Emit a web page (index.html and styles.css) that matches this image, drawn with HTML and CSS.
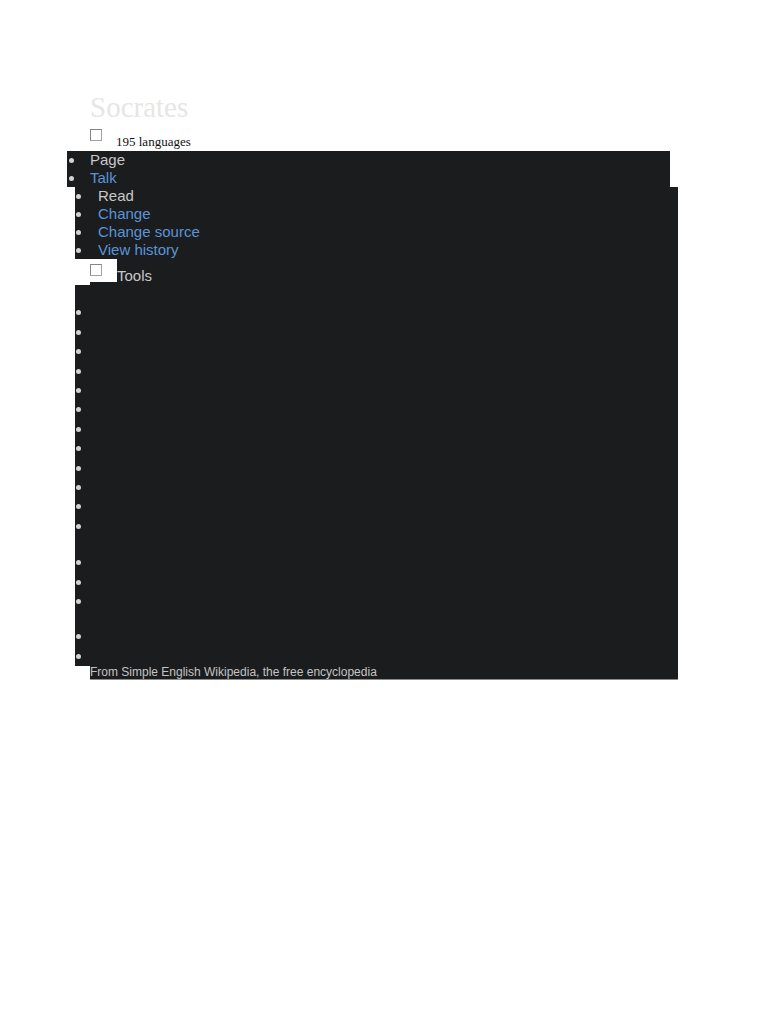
FILE: index.html
```html
<!DOCTYPE html>
<html lang="en">
<head>
<meta charset="utf-8">
<title>Socrates - Simple English Wikipedia</title>
<link rel="stylesheet" href="styles.css">
</head>
<body>
<div class="page">
  <h1 class="title">Socrates</h1>
  <div class="lang-row">
    <input type="checkbox" class="check" aria-label="Languages">
    <span class="lang-label">195 languages</span>
  </div>
  <ul class="tabs">
    <li class="item"><span class="text">Page</span></li>
    <li class="item"><a class="link" href="#">Talk</a></li>
  </ul>
  <div class="main-block">
    <ul class="views">
      <li class="item"><span class="text">Read</span></li>
      <li class="item"><a class="link" href="#">Change</a></li>
      <li class="item"><a class="link" href="#">Change source</a></li>
      <li class="item"><a class="link" href="#">View history</a></li>
    </ul>
    <div class="tools-row">
      <div class="tools-toggle">
        <div class="tools-box"><input type="checkbox" class="check" aria-label="Tools"></div>
        <div class="tools-step"></div>
      </div>
      <span class="tools-label">Tools</span>
    </div>
    <div class="tool-lists">
      <ul class="tool-group">
        <li class="tool-item"></li>
        <li class="tool-item"></li>
        <li class="tool-item"></li>
        <li class="tool-item"></li>
        <li class="tool-item"></li>
        <li class="tool-item"></li>
        <li class="tool-item"></li>
        <li class="tool-item"></li>
        <li class="tool-item"></li>
        <li class="tool-item"></li>
        <li class="tool-item"></li>
        <li class="tool-item"></li>
      </ul>
      <ul class="tool-group group-2">
        <li class="tool-item"></li>
        <li class="tool-item"></li>
        <li class="tool-item"></li>
      </ul>
      <ul class="tool-group group-3">
        <li class="tool-item"></li>
        <li class="tool-item"></li>
      </ul>
    </div>
  </div>
  <div class="tagline">From Simple English Wikipedia, the free encyclopedia</div>
</div>
</body>
</html>
```

FILE: styles.css
```css
html, body {
  margin: 0;
  padding: 0;
  background: #ffffff;
}

.page {
  padding-top: 90px;
  font-family: "Liberation Sans", Arial, sans-serif;
}

.title {
  margin: 0 0 0 90px;
  font-family: "Liberation Serif", "Times New Roman", serif;
  font-weight: normal;
  font-size: 29px;
  line-height: 34px;
  color: #e6e6e4;
}

.lang-row {
  display: flex;
  align-items: flex-start;
  height: 27px;
  margin-left: 90px;
}

.check {
  appearance: none;
  -webkit-appearance: none;
  display: block;
  box-sizing: border-box;
  width: 12px;
  height: 12px;
  margin: 0;
  background: #ffffff;
  border: 1px solid #a2a2a2;
  border-top-color: #858585;
  border-left-color: #858585;
  border-radius: 0;
}

.lang-row .check {
  margin-top: 5px;
}

.lang-label {
  margin-top: 10px;
  margin-left: 14px;
  font-family: "Liberation Serif", "Times New Roman", serif;
  font-size: 13px;
  line-height: 15px;
  color: #111111;
}

.tabs,
.views,
.tool-group {
  list-style: none;
  margin: 0;
  padding: 0;
}

.tabs {
  margin-left: 67px;
  width: 602.5px;
  background: #1b1c1e;
}

.item {
  display: flex;
  align-items: center;
  height: 18px;
  font-size: 15px;
  line-height: 18px;
}

.item::before,
.tool-item::before {
  content: "";
  flex: none;
  width: 5px;
  height: 5px;
  border-radius: 50%;
  background: #d2d2d2;
}

.tabs .item::before {
  margin-left: 2.2px;
  margin-right: 15.8px;
}

.views .item::before {
  margin-left: 0.5px;
  margin-right: 17.5px;
}

.text {
  color: #c8c8c8;
}

.link {
  color: #5a94d8;
  text-decoration: none;
}

.main-block {
  margin-left: 75px;
  width: 603px;
  background: #1b1c1e;
}

.tools-row {
  display: flex;
  height: 27px;
}

.tools-toggle {
  display: flex;
  flex-direction: column;
  width: 42px;
  flex: none;
}

.tools-box {
  box-sizing: border-box;
  height: 23px;
  padding: 4.5px 0 0 15px;
  background: #ffffff;
}

.tools-step {
  width: 15px;
  height: 3px;
  background: #ffffff;
}

.tools-label {
  padding-top: 8px;
  font-size: 15px;
  line-height: 18px;
  color: #c8c8c8;
}

.tool-lists {
  padding-top: 17.3px;
}

.tool-item {
  display: flex;
  align-items: center;
  height: 19.4px;
}

.tool-item::before {
  margin-left: 0.8px;
}

.group-2 {
  margin-top: 17.2px;
}

.group-3 {
  margin-top: 15.8px;
}

.tagline {
  box-sizing: border-box;
  margin-top: -2px;
  margin-left: 90px;
  width: 588px;
  padding-top: 2.5px;
  font-size: 12px;
  line-height: 13px;
  color: #c4c4c4;
  background: #1b1c1e;
  border-bottom: 1px solid #8a8a8a;
}
```
